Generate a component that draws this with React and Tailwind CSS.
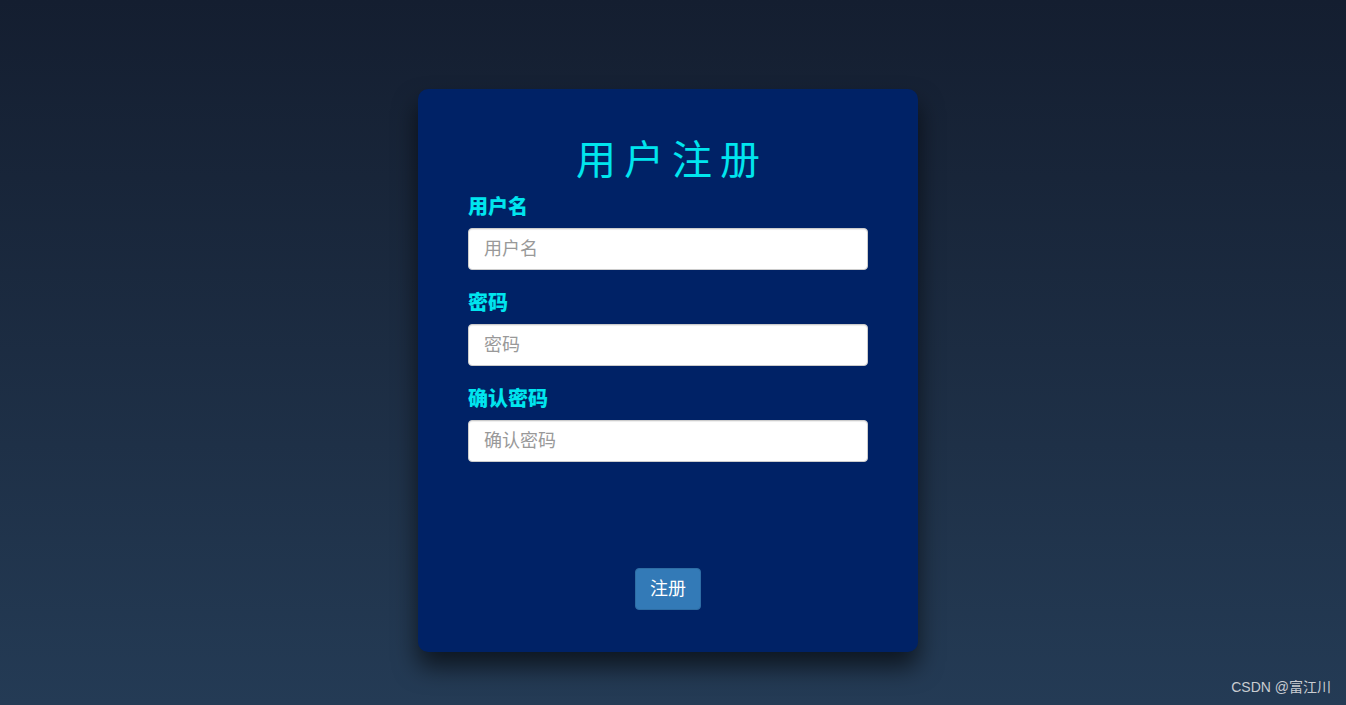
import React from 'react';

const Field = ({ label, placeholder, type = 'text', first }) => (
  <div className={first ? '' : 'mt-[21px]'}>
    <label className="block text-[20px] leading-[25px] font-black text-[#00e5ee] mb-[8px]">{label}</label>
    <input
      type={type}
      placeholder={placeholder}
      className="block w-full h-[42px] px-[15px] bg-white rounded-[4px] border border-[#cccccc] text-[18px] text-[#555] placeholder:text-[#999] outline-none shadow-[inset_0_1px_1px_rgba(0,0,0,0.075)]"
    />
  </div>
);

export default function App() {
  return (
    <div
      className="relative w-full h-[705px] flex justify-center items-start bg-gradient-to-b from-[#141e30] to-[#243b55] overflow-hidden"
      style={{ fontFamily: '"Liberation Sans", "Noto Sans CJK SC", sans-serif' }}
    >
      <div className="mt-[89px] mr-[10px] w-[500px] h-[563px] bg-[#002266] rounded-[10px] px-[50px] pt-[49px] pb-[42px] flex flex-col shadow-[0_15px_25px_rgba(0,0,0,0.6)]">
        <h2 className="text-center text-[40px] leading-[44px] tracking-[8px] text-[#00e5ee] font-normal mb-[13px] pl-[8px]">用户注册</h2>
        <Field label="用户名" placeholder="用户名" first />
        <Field label="密码" placeholder="密码" type="password" />
        <Field label="确认密码" placeholder="确认密码" type="password" />
        <div className="mt-auto flex justify-center">
          <button className="h-[42px] px-[14px] bg-[#337ab7] text-white text-[18px] rounded-[4px] border border-[#2e6da4]">注册</button>
        </div>
      </div>
      <div className="absolute right-[15px] bottom-[7px] text-[14px] text-[#c9ccd1]">CSDN @富江川</div>
    </div>
  );
}
